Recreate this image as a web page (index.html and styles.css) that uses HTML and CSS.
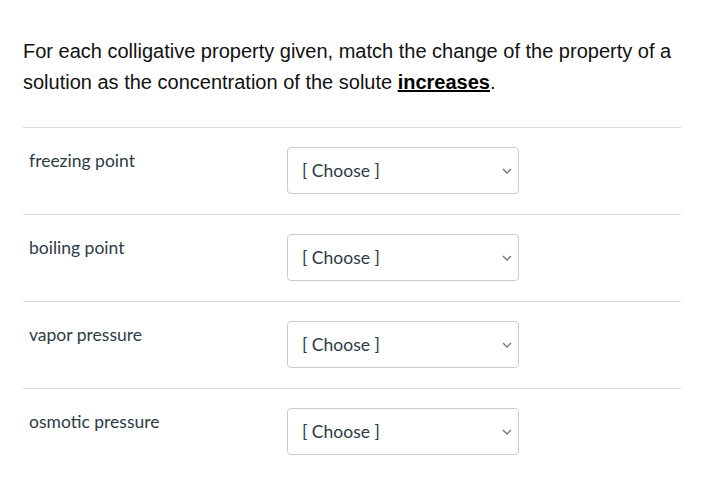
FILE: index.html
```html
<!DOCTYPE html>
<html>
<head>
<meta charset="utf-8">
<link rel="stylesheet" href="styles.css">
</head>
<body>
<div class="quiz">
  <p class="question">For each colligative property given, match the change of the property of a solution as the concentration of the solute <strong class="em">increases</strong>.</p>
  <div class="answers">
    <div class="row">
      <div class="label">freezing point</div>
      <div class="select"><span>[ Choose ]</span><svg class="chev" width="10" height="6" viewBox="0 0 10 6"><path d="M1 1 L5 5 L9 1" fill="none" stroke="#777" stroke-width="1.4"/></svg></div>
    </div>
    <div class="row">
      <div class="label">boiling point</div>
      <div class="select"><span>[ Choose ]</span><svg class="chev" width="10" height="6" viewBox="0 0 10 6"><path d="M1 1 L5 5 L9 1" fill="none" stroke="#777" stroke-width="1.4"/></svg></div>
    </div>
    <div class="row">
      <div class="label">vapor pressure</div>
      <div class="select"><span>[ Choose ]</span><svg class="chev" width="10" height="6" viewBox="0 0 10 6"><path d="M1 1 L5 5 L9 1" fill="none" stroke="#777" stroke-width="1.4"/></svg></div>
    </div>
    <div class="row">
      <div class="label">osmotic pressure</div>
      <div class="select"><span>[ Choose ]</span><svg class="chev" width="10" height="6" viewBox="0 0 10 6"><path d="M1 1 L5 5 L9 1" fill="none" stroke="#777" stroke-width="1.4"/></svg></div>
    </div>
  </div>
</div>
</body>
</html>
```
FILE: styles.css
```css
body {
  margin: 0;
  background: #fff;
}
.quiz {
  padding: 35px 25px 0 23px;
}
.question {
  margin: 0 0 30px 0;
  padding-top: 1px;
  font-family: "Liberation Sans", Arial, sans-serif;
  font-size: 20px;
  line-height: 30.5px;
  color: #111;
}
.em {
  font-weight: bold;
  text-decoration: underline;
  color: #000;
}
.row {
  display: flex;
  align-items: flex-start;
  border-top: 1px solid #dcdcdc;
  padding: 19px 0 20px 6px;
}
.label {
  width: 258px;
  padding-top: 4px;
  font-family: Lato, sans-serif;
  font-size: 17.5px;
  line-height: 20px;
  color: #2d3b45;
}
.select {
  position: relative;
  box-sizing: border-box;
  width: 232px;
  height: 47px;
  border: 1px solid #c7cdd1;
  border-radius: 4px;
  padding: 0 14px;
  display: flex;
  align-items: center;
  font-family: Lato, sans-serif;
  font-size: 17.5px;
  color: #2d3b45;
}
.chev {
  position: absolute;
  right: 6px;
  top: 20px;
}
```
